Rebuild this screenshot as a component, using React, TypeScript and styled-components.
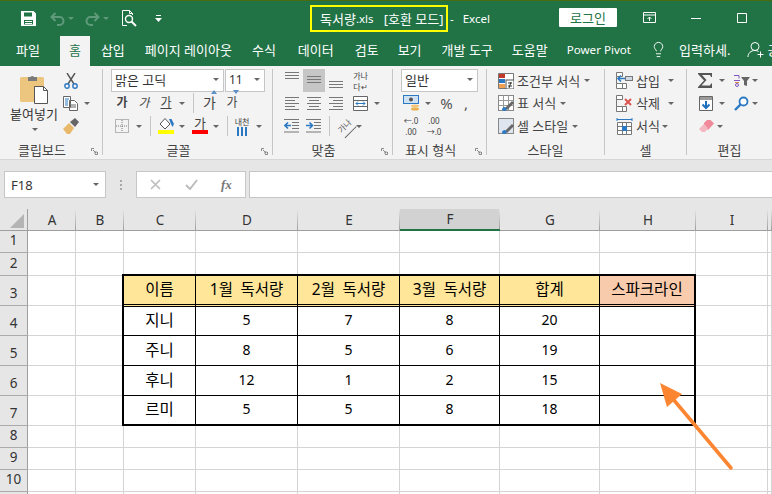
import React from "react";
import styled, { createGlobalStyle } from "styled-components";
import { Lightbulb } from "lucide-react";

const FONT = `"Noto Sans", "Noto Sans CJK KR", sans-serif`;
const GREEN = "#217346";
const LINE = "#c6c6c6";
const INK = "#444";

const Global = createGlobalStyle`
  html, body { margin: 0; padding: 0; background: #fff; overflow: hidden; }
  * { box-sizing: border-box; }
`;

const Page = styled.div`
  position: relative; width: 772px; height: 494px; overflow: hidden;
  display: flex; flex-direction: column; font-family: ${FONT}; font-size: 13px; color: ${INK};
`;

/* ---------- title bar ---------- */
const TitleBar = styled.header`
  height: 36px; flex: none; background: ${GREEN}; border-top: 1px solid #4b6b10;
  display: flex; align-items: center; color: #fff;
`;
const Qat = styled.div`width: 310px; flex: none; display: flex; align-items: center; padding-left: 21px;`;
const TitleBox = styled.div`
  width: 138px; height: 27px; flex: none; border: 2px solid #ffff00; padding-left: 8px;
  display: flex; align-items: center; white-space: pre; color: #fff; margin-top: -1px;
`;
const Ext = styled.span`font-size: 11.5px;`;
const TitleApp = styled.div`margin-left: 2px; width: 109px; flex: none; white-space: pre; margin-top: -1px; font-size: 11.5px;`;
const Login = styled.div`
  width: 58px; height: 19px; flex: none; background: #fff; color: ${GREEN}; border-radius: 1px;
  display: flex; align-items: center; justify-content: center; margin-top: -2px;
`;

const Svg = styled.svg<{ $ml?: number }>`flex: none; display: block; margin-left: ${p => p.$ml || 0}px;`;
const Caret = styled.i<{ $ml?: number; $c?: string }>`
  flex: none; width: 0; height: 0; display: block; margin-left: ${p => p.$ml || 0}px;
  border-left: 3px solid transparent; border-right: 3px solid transparent;
  border-top: 3px solid ${p => p.$c || "#666"};
`;

/* ---------- tabs ---------- */
const Tabs = styled.nav`
  height: 30px; flex: none; background: ${GREEN}; color: #fff; padding-left: 7px;
  display: flex; align-items: stretch; gap: 2px; overflow: hidden; white-space: nowrap;
`;
const Tab = styled.div<{ $active?: boolean; $latin?: boolean; $ml?: number }>`
  flex: none; padding: 0 9px 3px; display: flex; align-items: center; justify-content: center;
  margin-left: ${p => p.$ml || 0}px;
  ${p => p.$latin ? "font-size: 11.6px;" : ""}
  ${p => p.$active ? `background: #f3f3f3; color: #217346;` : ""}
`;
const TabExtra = styled.div<{ $ml: number }>`
  flex: none; display: flex; align-items: center; padding-bottom: 3px; margin-left: ${p => p.$ml}px;
`;

/* ---------- ribbon ---------- */
const Ribbon = styled.div`
  height: 94px; flex: none; background: #f3f3f3; border-bottom: 1px solid #d6d6d6;
  padding-top: 3px; display: flex; align-items: flex-start;
`;
const Group = styled.section<{ $w: number; $last?: boolean }>`
  position: relative; flex: none; width: ${p => p.$w}px; height: 86px; display: flex; flex-direction: column;
  ${p => p.$last ? "" : `border-right: 1px solid ${LINE};`}
`;
const Rows = styled.div`height: 69px; flex: none; display: flex; flex-direction: column;`;
const Row = styled.div<{ $h?: number; $pl?: number }>`
  height: ${p => p.$h || 23}px; flex: none; display: flex; align-items: center; padding-left: ${p => p.$pl || 0}px;
  color: ${INK}; white-space: nowrap;
`;
const R2 = styled(Row)`height: 22px;`;
const R3 = styled(Row)`height: 24px;`;
const GroupLabel = styled.div<{ $launcher?: boolean }>`
  margin-top: 5px; height: 14px; line-height: 14px; text-align: center; color: #444;
  padding-right: ${p => p.$launcher ? 18 : 0}px;
`;
const Launcher = styled.svg`position: absolute; right: 4px; bottom: 0;`;
const Clip = styled.div`height: 69px; display: flex;`;
const PasteCol = styled.div`
  width: 50px; margin-left: 9px; flex: none; display: flex; flex-direction: column; align-items: center; padding-top: 5px;
`;
const PasteText = styled.div`margin-top: 2px; line-height: 16px; color: #333; white-space: nowrap;`;
const PasteCaret = styled(Caret)`margin-top: 6px; margin-left: 2px;`;
const SmallCol = styled.div`margin-left: 4px; display: flex; flex-direction: column;`;
const Select = styled.div<{ $w: number; $ml: number; $size?: number }>`
  width: ${p => p.$w}px; height: 23px; margin-left: ${p => p.$ml}px; flex: none; background: #fff;
  border: 1px solid ${LINE}; display: flex; align-items: center; justify-content: space-between;
  padding: 0 4px 2px 3px; color: #333; font-size: ${p => p.$size || 13}px;
`;
const Sep = styled.i<{ $ml: number }>`flex: none; display: block; width: 1px; height: 20px; background: ${LINE}; margin-left: ${p => p.$ml}px;`;
const Hg = styled.span<{ $ml?: number; $w?: number; $size?: number; $b?: boolean; $it?: boolean; $u?: boolean }>`
  flex: none; display: block; text-align: center; color: #444;
  margin-left: ${p => p.$ml || 0}px; width: ${p => p.$w || 12}px; font-size: ${p => p.$size || 12}px;
  line-height: 16px; font-weight: ${p => p.$b ? 700 : 400};
  ${p => p.$it ? "font-style: italic;" : ""} ${p => p.$u ? "text-decoration: underline;" : ""}
`;
const Grow = styled(Hg)<{ $dir: "up" | "down" }>`
  position: relative;
  &::after {
    content: ""; position: absolute; right: -1px; top: -5px; width: 0; height: 0;
    border-left: 3px solid transparent; border-right: 3px solid transparent;
    ${p => p.$dir === "up" ? "border-bottom: 4px solid #5b8fc7;" : "border-top: 4px solid #5b8fc7;"}
  }
`;
const ColorLetter = styled.span<{ $ml: number }>`
  flex: none; width: 16px; height: 20px; margin-left: ${p => p.$ml}px; display: flex; flex-direction: column; align-items: center;
  font-size: 13px; line-height: 14px; color: #444;
  &::after { content: ""; display: block; width: 16px; height: 4px; background: #ff0000; flex: none; }
`;
const Stack = styled.span<{ $ml: number; $w: number; $size?: number; $lh?: number }>`
  flex: none; width: ${p => p.$w}px; margin-left: ${p => p.$ml}px; display: flex; flex-direction: column; align-items: center;
  font-size: ${p => p.$size || 8}px; line-height: ${p => p.$lh || 11}px; color: #444; white-space: nowrap;
`;
const Highlight = styled.div<{ $ml: number }>`
  flex: none; width: 22px; height: 23px; margin-left: ${p => p.$ml}px; background: #c6c6c6;
  display: flex; justify-content: center;
`;
const Rotated = styled.span<{ $ml: number }>`
  flex: none; width: 16px; margin-left: ${p => p.$ml}px; font-size: 8px; line-height: 16px; color: #555;
  white-space: nowrap; transform: rotate(-45deg); text-align: center; border-bottom: 1px solid #666;
`;
const Symbol = styled.span<{ $ml: number; $size: number; $w: number }>`
  flex: none; margin-left: ${p => p.$ml}px; width: ${p => p.$w}px; font-size: ${p => p.$size}px; text-align: center; color: #555;
`;
const CmdText = styled.span<{ $ml: number }>`flex: none; margin-left: ${p => p.$ml}px; margin-top: -1px; color: #444;`;

/* ---------- formula bar ---------- */
const FormulaBar = styled.div`
  height: 49px; flex: none; background: #e6e6e6; padding: 11px 0 0 4px; display: flex; align-items: flex-start;
`;
const NameBox = styled.div`
  width: 102px; height: 27px; flex: none; background: #fff; border: 1px solid ${LINE}; color: #333; font-size: 13px;
  display: flex; align-items: center; justify-content: space-between; padding: 0 6px 0 6px;
`;
const Dots = styled.div`
  width: 30px; height: 27px; flex: none; display: flex; flex-direction: column; align-items: center; justify-content: center; gap: 2px;
  & > i { display: block; width: 2px; height: 2px; background: #a8a8a8; }
`;
const FxBox = styled.div`
  width: 110px; height: 27px; flex: none; background: #fff; border: 1px solid ${LINE};
  display: flex; align-items: center; padding-left: 13px;
`;
const Fx = styled.span`
  margin-left: 23px; font-family: "Liberation Serif", serif; font-style: italic; font-weight: 700; font-size: 13px; color: #777;
`;
const FormulaInput = styled.div`
  flex: 1; height: 27px; margin-left: 3px; background: #fff; border: 1px solid ${LINE}; border-right: 0;
`;

/* ---------- sheet ---------- */
const Sheet = styled.div`
  flex: 1; min-height: 0; overflow: hidden; display: grid;
  grid-template-columns: 28px 48px 48px 72px 102px 102px 100px 100px 96px 72px 1fr;
  grid-template-rows: 22px 22px 23px 30px 30px 30px 30px 30px 22px 22px 22px 22px;
  background: #fff;
`;
const Corner = styled.div`
  background: #e6e6e6; border-right: 1px solid #9f9f9f; border-bottom: 1px solid #9f9f9f;
  display: flex; align-items: flex-end; justify-content: flex-end; padding: 0 3px 2px 0;
  & > i { display: block; width: 14px; height: 14px; background: #b4b4b4; clip-path: polygon(100% 0, 100% 100%, 0 100%); }
`;
const ColHead = styled.div<{ $sel?: boolean }>`
  background-color: ${p => p.$sel ? "#d2d2d2" : "#e6e6e6"};
  background-image: linear-gradient(#e6e6e6, #9f9f9f);
  background-size: 1px 100%; background-repeat: no-repeat; background-position: right top;
  border-bottom: ${p => p.$sel ? `2px solid ${GREEN}` : "1px solid #9f9f9f"};
  display: flex; align-items: center; justify-content: center; font-size: 13.5px; color: #333; line-height: 20px;
`;
const RowHead = styled.div`
  background: #e6e6e6; border-right: 1px solid #9f9f9f; border-bottom: 1px solid #ababab;
  display: flex; align-items: flex-end; justify-content: center; font-size: 13.5px; line-height: 23px; color: #333;
`;
const Cell = styled.div`border-right: 1px solid #d4d4d4; border-bottom: 1px solid #d4d4d4;`;
const DataTable = styled.div`
  grid-column: 4 / 10; grid-row: 4 / 9; margin: -2px 0 0 -2px; border: 2px solid #000; background: #fff; z-index: 1;
  display: grid; grid-template-columns: 72px 102px 102px 100px 100px 94px; grid-template-rows: 31px 29px 30px 30px 28px;
`;
const TCell = styled.div<{ $fill?: string; $head?: boolean; $lastCol?: boolean; $lastRow?: boolean; $num?: boolean }>`
  background: ${p => p.$fill || "#fff"};
  border-right: ${p => p.$lastCol ? "0" : "1px solid #000"};
  border-bottom: ${p => p.$head ? "3px double #000" : p.$lastRow ? "0" : "1px solid #000"};
  display: flex; align-items: center; justify-content: center; color: #000; word-spacing: 3.5px;
  padding-bottom: 3px;
  font-size: ${p => p.$num ? 14 : 15.5}px; white-space: nowrap;
`;
const ArrowOverlay = styled.svg`position: absolute; left: 0; top: 0; z-index: 5; pointer-events: none;`;

/* ---------- icons ---------- */
type I = { ml?: number };
const Save = () => (
  <Svg width="15" height="15" viewBox="0 0 15 15">
    <path fill="#fff" fillRule="evenodd" d="M0 0H12.5L15 2.5V15H0ZM3 1.5V5.5H11V1.5ZM3 9V13.5H12V9Z" />
    <path fill="#fff" d="M4 10h7v1H4zM4 12h7v1H4z" />
  </Svg>
);
const Undo = ({ ml, flip }: I & { flip?: boolean }) => (
  <Svg $ml={ml} width="15" height="14" viewBox="0 0 15 14">
    <path
      transform={flip ? "matrix(-1 0 0 1 15 0)" : undefined}
      fill="none" stroke="#5f9a7b" strokeWidth="2"
      d="M5.5 1 1.5 5l4 4M1.5 5H9.5a4 4 0 0 1 0 8H7" />
  </Svg>
);
const Preview = ({ ml }: I) => (
  <Svg $ml={ml} width="16" height="17" viewBox="0 0 16 17">
    <path fill="none" stroke="#fff" d="M1.5.5H8.5L11.5 3.5V5M8.5.5V3.5H11.5M1.5.5V15.5H6" />
    <circle cx="8" cy="9" r="3.5" fill="none" stroke="#fff" strokeWidth="1.4" />
    <path stroke="#fff" strokeWidth="2" d="M10.5 11.5 15 16" />
  </Svg>
);
const QatMore = ({ ml }: I) => (
  <Svg $ml={ml} width="7" height="7" viewBox="0 0 7 7">
    <path fill="#fff" d="M1 0h5v1H1zM0 3h7L3.5 7z" />
  </Svg>
);
const RibbonDisplay = ({ ml }: I) => (
  <Svg $ml={ml} width="13" height="11" viewBox="0 0 13 11" style={{ marginTop: -2 }}>
    <path fill="none" stroke="#fff" d="M.5.5h12v10H.5zM.5 3h12M6.5 9V5M4.5 7l2-2 2 2" />
  </Svg>
);
const Minimize = ({ ml }: I) => (
  <Svg $ml={ml} width="10" height="10" viewBox="0 0 10 10" style={{ marginTop: -2 }}><path stroke="#fff" d="M0 5.5h10" /></Svg>
);
const Maximize = ({ ml }: I) => (
  <Svg $ml={ml} width="10" height="10" viewBox="0 0 10 10" style={{ marginTop: -2 }}>
    <path fill="none" stroke="#fff" d="M.5.5h9v9h-9z" />
  </Svg>
);
const Person = () => (
  <Svg width="18" height="18" viewBox="0 0 18 18">
    <circle cx="8" cy="5.5" r="4" fill="none" stroke="#fff" />
    <path fill="none" stroke="#fff" d="M1 16c0-4 3-6.5 7-6.5 1.5 0 2.5.3 3.5 1M13.5 10.5v6M10.5 13.5h6" />
  </Svg>
);
const PasteIcon = () => (
  <Svg width="28" height="30" viewBox="0 0 28 30">
    <rect x="0" y="3" width="24" height="25" rx="1.5" fill="#ecc57e" />
    <path fill="#7a7a7a" d="M8 3h2.5a2 2 0 0 1 3.5 0H17v4H8z" />
    <path fill="#fff" stroke="#555" d="M14.5 12.5H23.5L27.5 16.5V29.5H14.5Z" />
    <path fill="none" stroke="#555" d="M23.5 12.5V16.5H27.5" />
  </Svg>
);
const Scissors = () => (
  <Svg $ml={1} width="14" height="16" viewBox="0 0 14 16">
    <path stroke="#555" strokeWidth="1.4" d="M3 0 10 11M11 0 4 11" />
    <circle cx="3" cy="13" r="2.2" fill="none" stroke="#2b79c2" strokeWidth="1.4" />
    <circle cx="11" cy="13" r="2.2" fill="none" stroke="#2b79c2" strokeWidth="1.4" />
  </Svg>
);
const CopyIcon = () => (
  <Svg width="15" height="15" viewBox="0 0 15 15">
    <path fill="#fff" stroke="#666" d="M.5.5h7v11h-7zM6.5 4.5h5l3 3v7h-8z" />
    <path stroke="#2b79c2" d="M2 3h4M2 5h3M2 7h3M2 9h3" />
    <path stroke="#666" d="M8 9h5M8 11h5" />
  </Svg>
);
const Brush = () => (
  <Svg $ml={0} width="16" height="16" viewBox="0 0 16 16">
    <path fill="#e8b96b" d="M0 11 6 5 11 10 7 16H4z" />
    <path fill="#666" d="M7 4 12 0 16 4 12 9z" />
  </Svg>
);
const Borders = () => (
  <Svg width="14" height="14" viewBox="0 0 14 14">
    <path fill="none" stroke="#777" strokeDasharray="1 1" d="M.5.5h13v13H.5zM7 1v12M1 7h12" />
  </Svg>
);
const Bucket = ({ ml }: I) => (
  <Svg $ml={ml} width="16" height="20" viewBox="0 0 16 20">
    <path fill="#fff" stroke="#555" d="M2 8 7 2.5 12 8 7 13Z" />
    <path fill="#2b79c2" d="M11 3h2.5L16 8l-1.5 3-1.5-3z" />
    <rect y="14" width="16" height="4" fill="#ffff00" />
  </Svg>
);
const Lines = ({ ml, kind, h = 14 }: I & { kind: "l" | "c" | "r"; h?: number }) => {
  const x = (short: boolean) => (kind === "l" || !short ? 0 : kind === "c" ? 2 : 4);
  const mk = (y: number, s: boolean) => `M${x(s)} ${y}h${s ? 10 : 14}`;
  const mid = Math.floor(h / 2);
  return (
    <Svg $ml={ml} width="14" height={h} viewBox={`0 0 14 ${h}`}>
      <path stroke="#777" fill="none" d={[mk(mid - 5.5, false), mk(mid - 2.5, true), mk(mid + 0.5, false), mk(mid + 3.5, true), mk(mid + 6.5, false)].join("")} />
    </Svg>
  );
};
const VLines = ({ ml, top }: I & { top: number }) => (
  <Svg $ml={ml} width="14" height="23" viewBox="0 0 14 23">
    <path stroke="#777" d={`M0 ${top + .5}h14M0 ${top + 3.5}h14M0 ${top + 6.5}h14`} />
  </Svg>
);
const Merge = ({ ml }: I) => (
  <Svg $ml={ml} width="15" height="15" viewBox="0 0 15 15">
    <path fill="#fff" stroke="#666" d="M.5.5h14v14H.5zM.5 4.5h14M.5 10.5h14" />
    <path stroke="#2b79c2" d="M3 7.5h9M3 7.5l2-2M3 7.5l2 2M12 7.5l-2-2M12 7.5l-2 2" fill="none" />
  </Svg>
);
const Indent = ({ ml, dir }: I & { dir: "in" | "out" }) => (
  <Svg $ml={ml} width="15" height="14" viewBox="0 0 15 14">
    <path stroke="#777" d="M0 .5h15M8 3.5h7M8 6.5h7M8 9.5h7M0 13h15" />
    <path stroke="#2b79c2" strokeWidth="1.6" fill="none"
      d={dir === "out" ? "M7 6.5H1M4 3.5l-3 3 3 3" : "M0 6.5h6M3.5 3.5l3 3-3 3"} />
  </Svg>
);
const Currency = ({ ml }: I) => (
  <Svg $ml={ml} width="17" height="16" viewBox="0 0 17 16">
    <rect x=".5" y=".5" width="15" height="8" fill="#cfe2f3" stroke="#2b79c2" />
    <circle cx="8" cy="4.5" r="2" fill="#555" />
    <ellipse cx="12" cy="11" rx="4" ry="1.5" fill="#f4c677" />
    <ellipse cx="12" cy="14" rx="4" ry="1.5" fill="#e8b04e" />
  </Svg>
);
const Decimal = ({ ml, w, dir }: I & { w: number; dir: "l" | "r" }) => (
  <Stack $ml={ml || 0} $w={w} $size={8}>
    <span>{dir === "l" ? "←.0" : ".00"}</span>
    <span>{dir === "l" ? ".00" : "→.0"}</span>
  </Stack>
);
const CondFormat = () => (
  <Svg width="16" height="16" viewBox="0 0 16 16">
    <path fill="#fff" stroke="#777" d="M.5.5h15v15H.5z" />
    <rect x="1" y="1" width="6" height="4" fill="#c0392b" />
    <rect x="1" y="6" width="6" height="4" fill="#2b79c2" />
    <rect x="1" y="11" width="6" height="4" fill="#f0a050" />
    <rect x="8" y="7" width="8" height="9" fill="#fff" stroke="#555" />
    <path stroke="#333" d="M10 10h4M10 13h4M13 9l-2 6" />
  </Svg>
);
const TableFormat = ({ light }: { light?: boolean }) => (
  <Svg width="17" height="17" viewBox="0 0 17 17">
    <rect x=".5" y=".5" width="15" height="15" fill={light ? "#dfe5ee" : "#fff"} stroke="#888" />
    {!light && <path stroke="#999" d="M.5 5.5h15M.5 10.5h15M5.5 .5v15M10.5 .5v15" />}
    <path d="M7 13 14 6l2 2-7 7z" fill="#666" />
    <path d="M4 15c0-2 1-3 3-3l2 2c-1 2-3 3-5 1z" fill="#2b79c2" />
  </Svg>
);
const CellGrid = ({ mode }: { mode: "ins" | "del" | "fmt" }) => (
  <Svg width="17" height="17" viewBox="0 0 17 17">
    {mode === "fmt" ? (
      <>
        <path stroke="#2b79c2" d="M1 1.5h15M1 0v3M16 0v3" />
        <path fill="#fff" stroke="#777" d="M1.5 4.5h14v12h-14zM1.5 8.5h14M1.5 12.5h14M6.5 4.5v12M10.5 4.5v12" />
        <rect x="6" y="8" width="5" height="5" fill="#2b79c2" />
      </>
    ) : (
      <>
        <path fill="#fff" stroke="#777" d="M.5.5h6v4h-6zM.5 11.5h6v5h-6zM6.5 11.5h4v5h-4zM.5 4.5v7" />
        {mode === "ins" ? (
          <>
            <path stroke="#2b79c2" strokeWidth="1.6" fill="none" d="M9 6.5H2M5 3.5l-3 3 3 3" />
            <rect x="9.5" y="4.5" width="7" height="4" fill="#cfd8e3" stroke="#777" />
          </>
        ) : (
          <path stroke="#d9534f" strokeWidth="2" d="M9 4l6 6M15 4l-6 6" />
        )}
      </>
    )}
  </Svg>
);
const Sigma = () => (
  <Svg width="15" height="15" viewBox="0 0 15 15">
    <path fill="#555" d="M0 0H14V4H13L12 2H4L8.5 7 3.5 12.5H12L13 10.5H14V15H0V14L6 7.5 0 1Z" />
  </Svg>
);
const SortFilter = ({ ml }: I) => (
  <Svg $ml={ml} width="16" height="13" viewBox="0 0 16 13">
    <path fill="none" stroke="#7e57c2" d="M0 1.5h5v3M0 6.5h6" />
    <path fill="none" stroke="#e08a3c" d="M1 8.5h4M3 8v1" />
    <circle cx="3" cy="11" r="1.5" fill="none" stroke="#7e57c2" />
    <path fill="#666" d="M7 3H16L13 7V12L10 11V7Z" />
  </Svg>
);
const FillDown = () => (
  <Svg width="14" height="15" viewBox="0 0 14 15">
    <path fill="#fff" stroke="#666" d="M.5.5h13v14H.5z" />
    <rect x="1" y="1" width="12" height="3" fill="#9a9a9a" />
    <path stroke="#1f6fbf" strokeWidth="2" fill="none" d="M7 5v7M3.5 8.5 7 12l3.5-3.5" />
  </Svg>
);
const Find = ({ ml }: I) => (
  <Svg $ml={ml} width="15" height="15" viewBox="0 0 15 15">
    <circle cx="9.5" cy="5.5" r="4" fill="#fff" stroke="#2b79c2" strokeWidth="1.8" />
    <path stroke="#2b79c2" strokeWidth="2.4" d="M6.5 8.5 1 14" />
  </Svg>
);
const Eraser = () => (
  <Svg width="15" height="13" viewBox="0 0 15 13">
    <path fill="#f08a9b" d="M5 3 8 0h3.5L15 3.5 9 10 5 7z" />
    <path fill="#f4b6c0" d="M5 4 9 8 6 12H3L0 9z" />
  </Svg>
);
const LauncherIcon = () => (
  <Launcher width="7" height="7" viewBox="0 0 7 7">
    <path fill="none" stroke="#888" d="M.5 3V.5H3M6.5 4V6.5H4M2 2l3 3M5 3v2H3" />
  </Launcher>
);

/* ---------- data ---------- */
const COLS = ["A", "B", "C", "D", "E", "F", "G", "H", "I", ""];
const ROWS = ["1", "2", "3", "4", "5", "6", "7", "8", "9", "10", ""];
const TABLE_HEAD = ["이름", "1월 독서량", "2월 독서량", "3월 독서량", "합계", "스파크라인"];
const TABLE_BODY = [
  ["지니", "5", "7", "8", "20", ""],
  ["주니", "8", "5", "6", "19", ""],
  ["후니", "12", "1", "2", "15", ""],
  ["르미", "5", "5", "8", "18", ""],
];
const TABS: { label: string; active?: boolean; nudge?: number; latin?: boolean }[] = [
  { label: "파일" },
  { label: "홈", active: true, nudge: 9 },
  { label: "삽입" },
  { label: "페이지 레이아웃" },
  { label: "수식" },
  { label: "데이터", nudge: 2 },
  { label: "검토", nudge: 1 },
  { label: "보기", nudge: -1 },
  { label: "개발 도구" },
  { label: "도움말", nudge: -1 },
  { label: "Power Pivot", nudge: -1, latin: true },
];
const inTable = (r: number, c: number) => r >= 2 && r <= 6 && c >= 2 && c <= 7;

export default function App() {
  return (
    <Page>
      <Global />
      <TitleBar>
        <Qat>
          <Save />
          <Undo ml={14} />
          <Caret $ml={3} $c="#5f9a7b" />
          <Undo ml={11} flip />
          <Caret $ml={3} $c="#5f9a7b" />
          <Preview ml={12} />
          <QatMore ml={18} />
        </Qat>
        <TitleBox>독서량<Ext>.xls</Ext>{"   [호환 모드]"}</TitleBox>
        <TitleApp>{"-   Excel"}</TitleApp>
        <Login>로그인</Login>
        <RibbonDisplay ml={26} />
        <Minimize ml={35} />
        <Maximize ml={36} />
      </TitleBar>

      <Tabs>
        {TABS.map(t => <Tab key={t.label} $active={t.active} $latin={t.latin} $ml={t.nudge}>{t.label}</Tab>)}
        <TabExtra $ml={8}><Lightbulb size={17} color="#fff" strokeWidth={1.3} /></TabExtra>
        <TabExtra $ml={10}>입력하세.</TabExtra>
        <TabExtra $ml={15}><Person /></TabExtra>
        <TabExtra $ml={0}>공</TabExtra>
      </Tabs>

      <Ribbon>
        <Group $w={103}>
          <Clip>
            <PasteCol>
              <PasteIcon />
              <PasteText>붙여넣기</PasteText>
              <PasteCaret />
            </PasteCol>
            <SmallCol>
              <Row><Scissors /></Row>
              <R2><CopyIcon /><Caret $ml={6} /></R2>
              <R3><Brush /></R3>
            </SmallCol>
          </Clip>
          <GroupLabel $launcher>클립보드</GroupLabel>
          <LauncherIcon />
        </Group>

        <Group $w={170}>
          <Rows>
            <Row>
              <Select $w={113} $ml={8}>맑은 고딕<Caret /></Select>
              <Select $w={40} $ml={1} $size={12}>11<Caret /></Select>
            </Row>
            <R2 $pl={13}>
              <Hg $b>가</Hg>
              <Hg $ml={10} $it>가</Hg>
              <Hg $ml={10} $u>가</Hg>
              <Caret $ml={7} />
              <Sep $ml={8} />
              <Grow $ml={9} $w={13} $size={14} $dir="up">가</Grow>
              <Grow $ml={10} $w={12} $size={12} $dir="down">가</Grow>
            </R2>
            <R3 $pl={12}>
              <Borders />
              <Caret $ml={7} />
              <Sep $ml={8} />
              <Bucket ml={7} />
              <Caret $ml={5} />
              <ColorLetter $ml={7}>가</ColorLetter>
              <Caret $ml={5} />
              <Sep $ml={8} />
              <Stack $ml={7} $w={14} $lh={10}>
                <span>내천</span>
                <Svg width="12" height="9" viewBox="0 0 12 9"><path stroke="#2b79c2" strokeWidth="2" d="M2 0v9M6 0v9M10 0v9" /></Svg>
              </Stack>
              <Caret $ml={7} />
            </R3>
          </Rows>
          <GroupLabel $launcher>글꼴</GroupLabel>
          <LauncherIcon />
        </Group>

        <Group $w={120}>
          <Rows>
            <Row $pl={12}>
              <VLines top={3} />
              <Highlight $ml={4}><VLines top={7} /></Highlight>
              <VLines ml={4} top={12} />
              <Stack $ml={10} $w={15}>
                <span>가나</span>
                <span>다↵</span>
              </Stack>
            </Row>
            <R2 $pl={12}>
              <Lines kind="l" />
              <Lines ml={8} kind="c" />
              <Lines ml={8} kind="r" />
              <Merge ml={10} />
              <Caret $ml={6} />
            </R2>
            <R3 $pl={11}>
              <Indent dir="out" />
              <Indent ml={7} dir="in" />
              <Sep $ml={8} />
              <Rotated $ml={7}>가나</Rotated>
              <Caret $ml={3} />
            </R3>
          </Rows>
          <GroupLabel $launcher>맞춤</GroupLabel>
          <LauncherIcon />
        </Group>

        <Group $w={94}>
          <Rows>
            <Row><Select $w={77} $ml={8}>일반<Caret /></Select></Row>
            <R2 $pl={10}>
              <Currency />
              <Caret $ml={5} />
              <Symbol $ml={9} $size={15} $w={13}>%</Symbol>
              <Symbol $ml={10} $size={15} $w={6}>,</Symbol>
            </R2>
            <R3 $pl={10}>
              <Decimal w={16} dir="l" />
              <Decimal ml={8} w={14} dir="r" />
            </R3>
          </Rows>
          <GroupLabel $launcher>표시 형식</GroupLabel>
          <LauncherIcon />
        </Group>

        <Group $w={118}>
          <Rows>
            <Row $pl={11}><CondFormat /><CmdText $ml={3}>조건부 서식</CmdText><Caret $ml={4} /></Row>
            <R2 $pl={11}><TableFormat /><CmdText $ml={2}>표 서식</CmdText><Caret $ml={4} /></R2>
            <R3 $pl={11}><TableFormat light /><CmdText $ml={2}>셀 스타일</CmdText><Caret $ml={4} /></R3>
          </Rows>
          <GroupLabel>스타일</GroupLabel>
        </Group>

        <Group $w={82}>
          <Rows>
            <Row $pl={11}><CellGrid mode="ins" /><CmdText $ml={3}>삽입</CmdText><Caret $ml={8} /></Row>
            <R2 $pl={11}><CellGrid mode="del" /><CmdText $ml={3}>삭제</CmdText><Caret $ml={8} /></R2>
            <R3 $pl={11}><CellGrid mode="fmt" /><CmdText $ml={3}>서식</CmdText><Caret $ml={2} /></R3>
          </Rows>
          <GroupLabel>셀</GroupLabel>
        </Group>

        <Group $w={85} $last>
          <Rows>
            <Row $pl={11}><Sigma /><Caret $ml={6} /><SortFilter ml={9} /><Caret $ml={2} /></Row>
            <R2 $pl={12}><FillDown /><Caret $ml={6} /><Find ml={9} /><Caret $ml={3} /></R2>
            <R3 $pl={12}><Eraser /><Caret $ml={3} /></R3>
          </Rows>
          <GroupLabel>편집</GroupLabel>
        </Group>
      </Ribbon>

      <FormulaBar>
        <NameBox>F18<Caret $ml={0} /></NameBox>
        <Dots><i /><i /><i /></Dots>
        <FxBox>
          <Svg width="11" height="11" viewBox="0 0 11 11"><path stroke="#bdbdbd" strokeWidth="1.6" d="M1 1l9 9M10 1l-9 9" /></Svg>
          <Svg $ml={24} width="13" height="11" viewBox="0 0 13 11"><path stroke="#bdbdbd" strokeWidth="2" fill="none" d="M1 6l4 4 7-9" /></Svg>
          <Fx>fx</Fx>
        </FxBox>
        <FormulaInput />
      </FormulaBar>

      <Sheet>
        <Corner><i /></Corner>
        {COLS.map((c, i) => <ColHead key={i} $sel={c === "F"}>{c}</ColHead>)}
        <DataTable>
          {TABLE_HEAD.map((t, i) => (
            <TCell key={t} $head $fill={i === 5 ? "#f8cbad" : "#ffe699"} $lastCol={i === 5}>{t}</TCell>
          ))}
          {TABLE_BODY.map((row, r) => row.map((v, c) => (
            <TCell key={`${r}-${c}`} $num={c > 0} $lastCol={c === 5} $lastRow={r === 3}>{v}</TCell>
          )))}
        </DataTable>
        {ROWS.map((label, r) => (
          <React.Fragment key={r}>
            <RowHead>{label}</RowHead>
            {COLS.map((_, c) => (inTable(r, c) ? null : <Cell key={c} />))}
          </React.Fragment>
        ))}
      </Sheet>

      <ArrowOverlay width="772" height="494" viewBox="0 0 772 494">
        <path d="M731 468 673 399" stroke="#fb8530" strokeWidth="3.5" strokeLinecap="round" fill="none" />
        <path d="M660 383 682 394 667 407Z" fill="#fb8530" />
      </ArrowOverlay>
    </Page>
  );
}
